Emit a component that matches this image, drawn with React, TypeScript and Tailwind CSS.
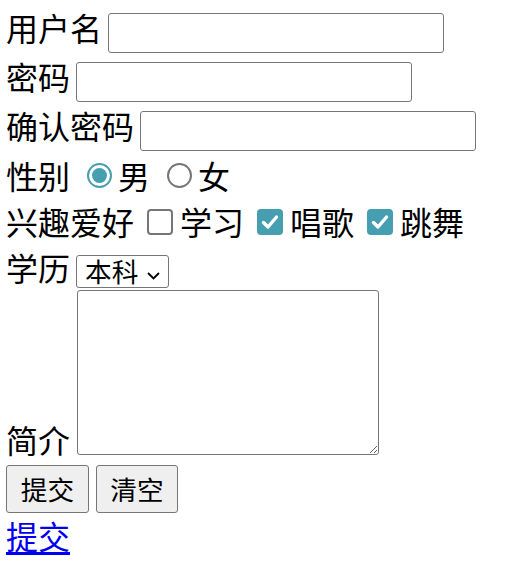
import { useState } from 'react';

const cjk = "font-['Noto_Sans_CJK_SC','Noto_Sans',sans-serif]";

export default function App() {
  const [gender, setGender] = useState('男');
  const [hobbies, setHobbies] = useState<string[]>(['唱歌', '跳舞']);

  const toggleHobby = (h: string) => {
    setHobbies(prev => (prev.includes(h) ? prev.filter(x => x !== h) : [...prev, h]));
  };

  const label = `${cjk} text-[32px] leading-[32px] text-black whitespace-nowrap`;
  const field = 'h-[40px] w-[336px] border border-[#767676] rounded-[3px] bg-white px-[2px] ml-[6px] mt-[2px] outline-none';

  return (
    <div className={`min-h-screen bg-white pl-[6px] text-black ${cjk}`}>
      {/* 用户名 */}
      <div className="flex items-start pt-[11px]">
        <span className={label}>用户名</span>
        <input type="text" className={field} />
      </div>

      {/* 密码 */}
      <div className="flex items-start mt-[7px]">
        <span className={label}>密码</span>
        <input type="password" className={field} />
      </div>

      {/* 确认密码 */}
      <div className="flex items-start mt-[7px]">
        <span className={label}>确认密码</span>
        <input type="password" className={field} />
      </div>

      {/* 性别 */}
      <div className="flex items-start mt-[8px]">
        <span className={label}>性别</span>
        {['男', '女'].map(g => (
          <label key={g} className="flex items-start">
            <span className="relative ml-[17px] mr-[6px] mt-[4px] w-[25px] h-[25px]">
              <input
                type="radio"
                name="gender"
                checked={gender === g}
                onChange={() => setGender(g)}
                className="appearance-none block w-[25px] h-[25px] rounded-full border-2 border-[#767676] bg-white checked:border-[#469eb1]"
              />
              {gender === g && (
                <span className="absolute left-[5px] top-[5px] w-[15px] h-[15px] rounded-full bg-[#469eb1] pointer-events-none" />
              )}
            </span>
            <span className={label}>{g}</span>
          </label>
        ))}
      </div>

      {/* 兴趣爱好 */}
      <div className="flex items-start mt-[14px]">
        <span className={label}>兴趣爱好</span>
        {['学习', '唱歌', '跳舞'].map(h => (
          <label key={h} className="flex items-start">
            <span className="relative ml-[13px] mr-[7px] mt-[4px] w-[26px] h-[26px]">
              <input
                type="checkbox"
                checked={hobbies.includes(h)}
                onChange={() => toggleHobby(h)}
                className="appearance-none block w-[26px] h-[26px] rounded-[4px] border-2 border-[#767676] bg-white checked:bg-[#469eb1] checked:border-[#469eb1]"
              />
              {hobbies.includes(h) && (
                <svg className="absolute left-0 top-0 pointer-events-none" width="26" height="26" viewBox="0 0 26 26">
                  <polyline points="6.5,13.5 11,18 19.5,8" fill="none" stroke="#fff" strokeWidth="3.4" strokeLinecap="round" strokeLinejoin="round" />
                </svg>
              )}
            </span>
            <span className={label}>{h}</span>
          </label>
        ))}
      </div>

      {/* 学历 */}
      <div className="flex items-start mt-[14px]">
        <span className={label}>学历</span>
        <div className="relative ml-[6px] mt-[4px]">
          <select className="appearance-none w-[93px] h-[33px] border border-[#767676] rounded-[3px] bg-white pl-[8px] text-[26.67px] leading-none outline-none">
            <option>本科</option>
            <option>硕士</option>
            <option>博士</option>
          </select>
          <svg className="absolute left-[71px] top-[17px] pointer-events-none" width="13" height="8" viewBox="0 0 13 8">
            <polyline points="1,1 6.5,6.5 12,1" fill="none" stroke="#000" strokeWidth="1.8" />
          </svg>
        </div>
      </div>

      {/* 简介 */}
      <div className="flex items-start mt-[2px]">
        <span className={`${label} mt-[133px]`}>简介</span>
        <textarea className="w-[302px] h-[165px] ml-[7px] border border-[#767676] rounded-[3px] bg-white resize outline-none" />
      </div>

      {/* 按钮 */}
      <div className="flex items-start gap-[7px] mt-[10px]">
        <button type="submit" className="w-[83px] h-[48px] border border-[#767676] rounded-[3px] bg-[#efefef] text-[26.67px] leading-none">
          提交
        </button>
        <button type="reset" className="w-[82px] h-[48px] border border-[#767676] rounded-[3px] bg-[#efefef] text-[26.67px] leading-none">
          清空
        </button>
      </div>

      {/* 链接 */}
      <div className="mt-[6px]">
        <a href="#" className={`${cjk} text-[32px] leading-[32px] text-[#0000ee] underline underline-offset-[3px]`}>
          提交
        </a>
      </div>
    </div>
  );
}
